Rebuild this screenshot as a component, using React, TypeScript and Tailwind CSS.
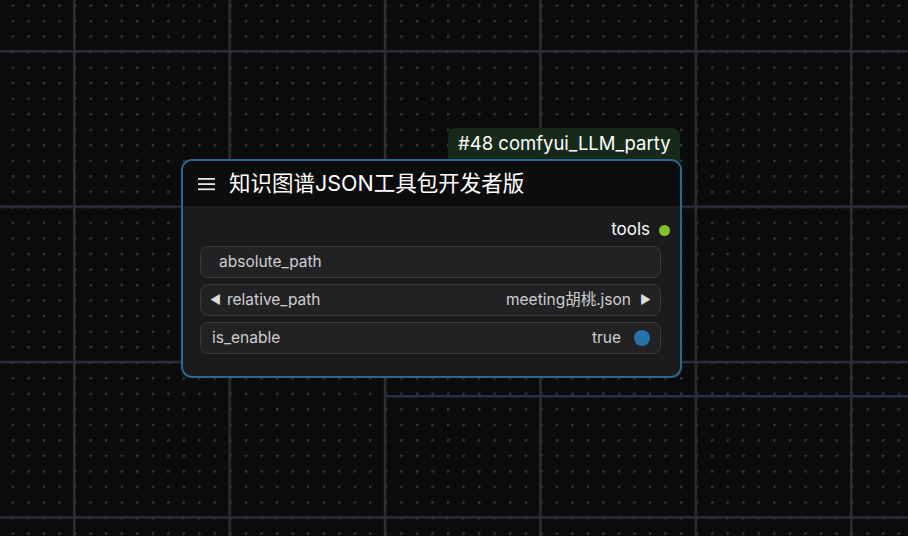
import React from "react";

function Canvas() {
  return (
    <svg className="absolute inset-0" width="908" height="536">
      <defs>
        <pattern id="dots" patternUnits="userSpaceOnUse" x="74" y="51" width="15.54" height="15.53">
          <rect x="0" y="-1" width="1.5" height="3.5" fill="#3c3c3f" />
          <rect x="-1" y="0" width="3.5" height="1.5" fill="#3c3c3f" />
        </pattern>
        <pattern id="lines" patternUnits="userSpaceOnUse" x="73" y="50" width="155.4" height="155.4">
          <rect x="0" y="0" width="2.5" height="155.4" fill="#2b2e37" />
          <rect x="0" y="0" width="155.4" height="2.5" fill="#2b2e37" />
        </pattern>
      </defs>
      <rect width="908" height="536" fill="#0b0b0c" />
      <rect width="908" height="536" fill="url(#dots)" />
      <rect width="908" height="536" fill="url(#lines)" />
      <rect x="385" y="395" width="523" height="2.5" fill="#27324a" />
    </svg>
  );
}

export default function App() {
  const font = { fontFamily: "Inter, 'Noto Sans CJK SC', sans-serif" };
  return (
    <div className="relative w-[908px] h-[536px] overflow-hidden bg-[#0b0b0c]" style={font}>
      <Canvas />
      <div className="absolute left-[448px] top-[128px] w-[232px] h-[34px] rounded-t-[8px] bg-[#172a1a] text-white text-[18.5px] pl-[10px] pt-[3px] leading-[24px]">
        #48 comfyui_LLM_party
      </div>
      <div className="absolute left-[181px] top-[159px] w-[501px] h-[219px] rounded-[11px] border-2 border-[#2a6892] bg-[#1b1b1d] overflow-hidden flex flex-col">
        <div className="h-[45px] bg-[#0c0c0d] flex items-center pl-[15px] gap-[13px] shrink-0">
          <svg width="18" height="14" viewBox="0 0 18 14">
            <rect x="0" y="1" width="17" height="1.8" fill="#e6e6e6" />
            <rect x="0" y="6.2" width="17" height="1.8" fill="#e6e6e6" />
            <rect x="0" y="11.4" width="17" height="1.8" fill="#e6e6e6" />
          </svg>
          <span className="text-[21.5px] text-white leading-none">知识图谱JSON工具包开发者版</span>
        </div>
        <div className="flex flex-col pl-[17px] pr-[19px] pt-[14px]">
          <div className="flex items-center justify-end gap-[9px] h-[20px] mr-[-9px]">
            <span className="text-[17px] text-white">tools</span>
            <span className="w-[11px] h-[11px] rounded-full bg-[#7ec323]" />
          </div>
          <div className="flex flex-col gap-[6px] mt-[6px]">
            <div className="h-[32px] rounded-[8px] bg-[#222224] border border-[#3a3a3d] flex items-center pl-[18px] text-[15.5px] text-[#cfcfcf]">
              absolute_path
            </div>
            <div className="h-[32px] rounded-[8px] bg-[#222224] border border-[#3a3a3d] flex items-center px-[9px] text-[15.5px] text-[#cfcfcf]">
              <span className="text-[12px] mr-[6px] text-[#dcdcdc]">◀</span>
              <span>relative_path</span>
              <span className="ml-auto">meeting胡桃.json</span>
              <span className="text-[12px] ml-[9px] text-[#dcdcdc]">▶</span>
            </div>
            <div className="h-[32px] rounded-[8px] bg-[#222224] border border-[#3a3a3d] flex items-center pl-[11px] pr-[10px] text-[15.5px] text-[#cfcfcf]">
              <span>is_enable</span>
              <span className="ml-auto mr-[13px]">true</span>
              <span className="w-[16px] h-[16px] rounded-full bg-[#2872a8]" />
            </div>
          </div>
        </div>
      </div>
    </div>
  );
}
